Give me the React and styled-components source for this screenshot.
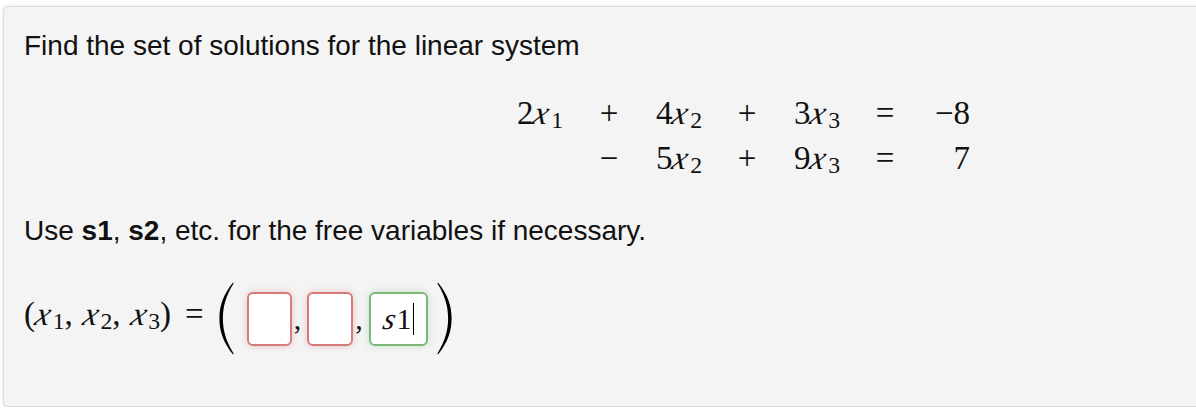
import React from "react";
import styled, { createGlobalStyle } from "styled-components";

const GlobalStyle = createGlobalStyle`
  html, body {
    margin: 0;
    padding: 0;
    background: #ffffff;
    overflow: hidden;
  }
`;

const Card = styled.div`
  margin: 6px -20px 0 3px;
  height: 401px;
  box-sizing: border-box;
  padding: 23px 20px 0 20px;
  background: #f4f4f4;
  border: 1px solid #dcdcdc;
  border-radius: 5px;
  box-shadow: 0 0 3px rgba(0, 0, 0, 0.12);
  color: #111;
`;

const Prompt = styled.p`
  margin: 0;
  font-family: "Liberation Sans", Arial, sans-serif;
  font-size: 28px;
  line-height: 32px;
`;

const Note = styled(Prompt)`
  margin-top: 34px;
`;

const System = styled.div`
  display: grid;
  grid-template-columns: 60px 92px 47px 90px 48px 90px 40px;
  width: max-content;
  margin: 29px 0 0 479px;
  font-family: "Liberation Serif", "Times New Roman", serif;
  font-size: 33px;
  line-height: 45px;
`;

const Cell = styled.span`
  justify-self: ${(p) => (p.$op ? "center" : "end")};
  white-space: nowrap;
`;

const Var = styled.span`
  display: inline-block;
  font-style: italic;
  transform: skewX(-14deg);
  margin: 0 1px;
`;

const Sub = styled.sub`
  font-size: 0.72em;
  vertical-align: -0.15em;
  line-height: 0;
  margin-left: 1px;
`;

const AnswerRow = styled.div`
  display: flex;
  align-items: center;
  height: 73px;
  margin-top: 35px;
  font-family: "Liberation Serif", "Times New Roman", serif;
  font-size: 33px;
`;

const Label = styled.span`
  line-height: 33px;
  padding-bottom: 8px;
  white-space: nowrap;
`;

const Rel = styled.span`
  margin-left: 14px;
`;

const Sep = styled.span`
  margin-right: 10px;
`;

const Delim = styled.svg`
  flex: none;
  margin: ${(p) => (p.$right ? "0 0 0 9px" : "0 13px 0 14px")};
`;

const Box = styled.div`
  flex: none;
  width: ${(p) => p.$w}px;
  height: 54px;
  box-sizing: border-box;
  display: flex;
  align-items: center;
  justify-content: center;
  background: #ffffff;
  border: 2px solid ${(p) => (p.$ok ? "#7cb87c" : "#d57b7b")};
  border-radius: 6px;
  box-shadow: 0 0 7px
    ${(p) => (p.$ok ? "rgba(110, 180, 110, 0.35)" : "rgba(210, 100, 100, 0.35)")};
  font-size: 30px;
  line-height: 30px;
`;

const Comma = styled.span`
  font-size: 30px;
  line-height: 30px;
  margin: 0 6px 0 2px;
`;

const Caret = styled.span`
  display: inline-block;
  width: 1px;
  height: 32px;
  margin-left: 1px;
  background: #000;
`;

const Term = ({ t }) =>
  t ? (
    <>
      {t[0]}
      <Var>x</Var>
      <Sub>{t[1]}</Sub>
    </>
  ) : null;

const rows = [
  [["2", "1"], "+", ["4", "2"], "+", ["3", "3"], "=", "−8"],
  [null, "−", ["5", "2"], "+", ["9", "3"], "=", "7"],
];

const Paren = ({ right }) => (
  <Delim $right={right} width="16" height="73" viewBox="0 0 16 73">
    <path
      transform={right ? "translate(16 0) scale(-1 1)" : undefined}
      d="M15 0.5 C5 13 1.4 24 1.4 36.5 C1.4 49 5 60 15 72.5 L15.6 71.4 C7.8 59 4.9 48 4.9 36.5 C4.9 25 7.8 14 15.6 1.6 Z"
      fill="#000"
    />
  </Delim>
);

const App = () => {
  return (
    <>
      <GlobalStyle />
      <Card>
        <Prompt>Find the set of solutions for the linear system</Prompt>
        <System>
          {rows.map((row, r) =>
            row.map((item, i) => (
              <Cell key={`${r}-${i}`} $op={i % 2 === 1}>
                {Array.isArray(item) || item === null ? <Term t={item} /> : item}
              </Cell>
            ))
          )}
        </System>
        <Note>
          Use <b>s1</b>, <b>s2</b>, etc. for the free variables if necessary.
        </Note>
        <AnswerRow>
          <Label>
            (<Var>x</Var>
            <Sub>1</Sub>,<Sep />
            <Var>x</Var>
            <Sub>2</Sub>,<Sep />
            <Var>x</Var>
            <Sub>3</Sub>)<Rel>=</Rel>
          </Label>
          <Paren />
          <Box $w={45} />
          <Comma>,</Comma>
          <Box $w={46} />
          <Comma>,</Comma>
          <Box $w={59} $ok>
            <Var>s</Var>1<Caret />
          </Box>
          <Paren right />
        </AnswerRow>
      </Card>
    </>
  );
};

export default App;
